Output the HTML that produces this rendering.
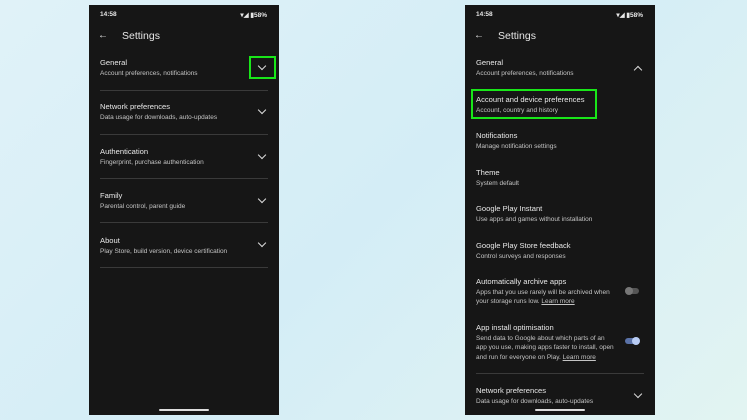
<!DOCTYPE html><html><head><style>
body{margin:0;width:747px;height:420px;overflow:hidden;background:linear-gradient(135deg,#e0f2f8,#d4edf6 50%,#e2f4f2);font-family:"Liberation Sans",sans-serif;position:relative}
.ph{position:absolute;top:5px;width:190px;height:410px;background:#161616;color:#e6e6e6}
.t{position:absolute;font-size:7.6px;color:#e8e8e8;white-space:nowrap}
.s{position:absolute;font-size:6.5px;color:#c4c4c4;white-space:nowrap;line-height:9.3px}
.d{position:absolute;left:11px;width:168px;height:1px;background:#3a3a3a}
.ch{position:absolute;width:5px;height:5px;border-right:1.2px solid #ddd;border-bottom:1.2px solid #ddd;transform:rotate(45deg)}
.up{transform:rotate(-135deg)}
.sb{position:absolute;top:6px;left:11px;font-size:6.5px;font-weight:bold}
.sr{position:absolute;top:6px;right:12px;font-size:6.5px;font-weight:bold}
.hd{position:absolute;top:25px;left:33px;font-size:10.5px}
.ar{position:absolute;top:25px;left:9px;font-size:10px}
.hb{position:absolute;bottom:4px;left:70px;width:50px;height:2px;background:#ddd;border-radius:1px}
.g{position:absolute;border:2.5px solid #19e619;box-sizing:border-box}
.tg{position:absolute;width:14px;height:6px;border-radius:3px}
.kn{position:absolute;width:8px;height:8px;border-radius:4px;top:-1px}
u{text-decoration:underline}
</style></head><body>
<div class="ph" style="left:89px">
<div class="sb">14:58</div><div class="sr">▾◢ ▮58%</div>
<div class="ar">←</div><div class="hd">Settings</div>
<div class="t" style="left:11px;top:53px">General</div><div class="s" style="left:11px;top:64px">Account preferences, notifications</div>
<div class="g" style="left:160px;top:51px;width:27px;height:23px"></div><div class="ch" style="left:170px;top:58px"></div>
<div class="d" style="top:85px"></div>
<div class="t" style="left:11px;top:97px">Network preferences</div><div class="s" style="left:11px;top:108px">Data usage for downloads, auto-updates</div><div class="ch" style="left:170px;top:102px"></div>
<div class="d" style="top:129px"></div>
<div class="t" style="left:11px;top:142px">Authentication</div><div class="s" style="left:11px;top:153px">Fingerprint, purchase authentication</div><div class="ch" style="left:170px;top:147px"></div>
<div class="d" style="top:173px"></div>
<div class="t" style="left:11px;top:186px">Family</div><div class="s" style="left:11px;top:197px">Parental control, parent guide</div><div class="ch" style="left:170px;top:191px"></div>
<div class="d" style="top:217px"></div>
<div class="t" style="left:11px;top:231px">About</div><div class="s" style="left:11px;top:242px">Play Store, build version, device certification</div><div class="ch" style="left:170px;top:235px"></div>
<div class="d" style="top:262px"></div>
<div class="hb"></div>
</div>
<div class="ph" style="left:465px">
<div class="sb">14:58</div><div class="sr">▾◢ ▮58%</div>
<div class="ar">←</div><div class="hd">Settings</div>
<div class="t" style="left:11px;top:53px">General</div><div class="s" style="left:11px;top:64px">Account preferences, notifications</div><div class="ch up" style="left:170px;top:62px"></div>
<div class="g" style="left:6px;top:84px;width:126px;height:30px"></div>
<div class="t" style="left:11px;top:90px">Account and device preferences</div><div class="s" style="left:11px;top:101px">Account, country and history</div>
<div class="t" style="left:11px;top:126px">Notifications</div><div class="s" style="left:11px;top:137px">Manage notification settings</div>
<div class="t" style="left:11px;top:163px">Theme</div><div class="s" style="left:11px;top:174px">System default</div>
<div class="t" style="left:11px;top:199px">Google Play Instant</div><div class="s" style="left:11px;top:210px">Use apps and games without installation</div>
<div class="t" style="left:11px;top:236px">Google Play Store feedback</div><div class="s" style="left:11px;top:247px">Control surveys and responses</div>
<div class="t" style="left:11px;top:272px">Automatically archive apps</div><div class="s" style="left:11px;top:283px">Apps that you use rarely will be archived when<br>your storage runs low. <u>Learn more</u></div>
<div class="tg" style="left:160px;top:283px;background:#555"><div class="kn" style="left:0;background:#777"></div></div>
<div class="t" style="left:11px;top:318px">App install optimisation</div><div class="s" style="left:11px;top:329px">Send data to Google about which parts of an<br>app you use, making apps faster to install, open<br>and run for everyone on Play. <u>Learn more</u></div>
<div class="tg" style="left:160px;top:333px;background:#5a72a8"><div class="kn" style="left:7px;background:#b8ccf4"></div></div>
<div class="d" style="top:368px"></div>
<div class="t" style="left:11px;top:381px">Network preferences</div><div class="s" style="left:11px;top:392px">Data usage for downloads, auto-updates</div><div class="ch" style="left:170px;top:386px"></div>
<div class="hb"></div>
</div>
</body></html>
